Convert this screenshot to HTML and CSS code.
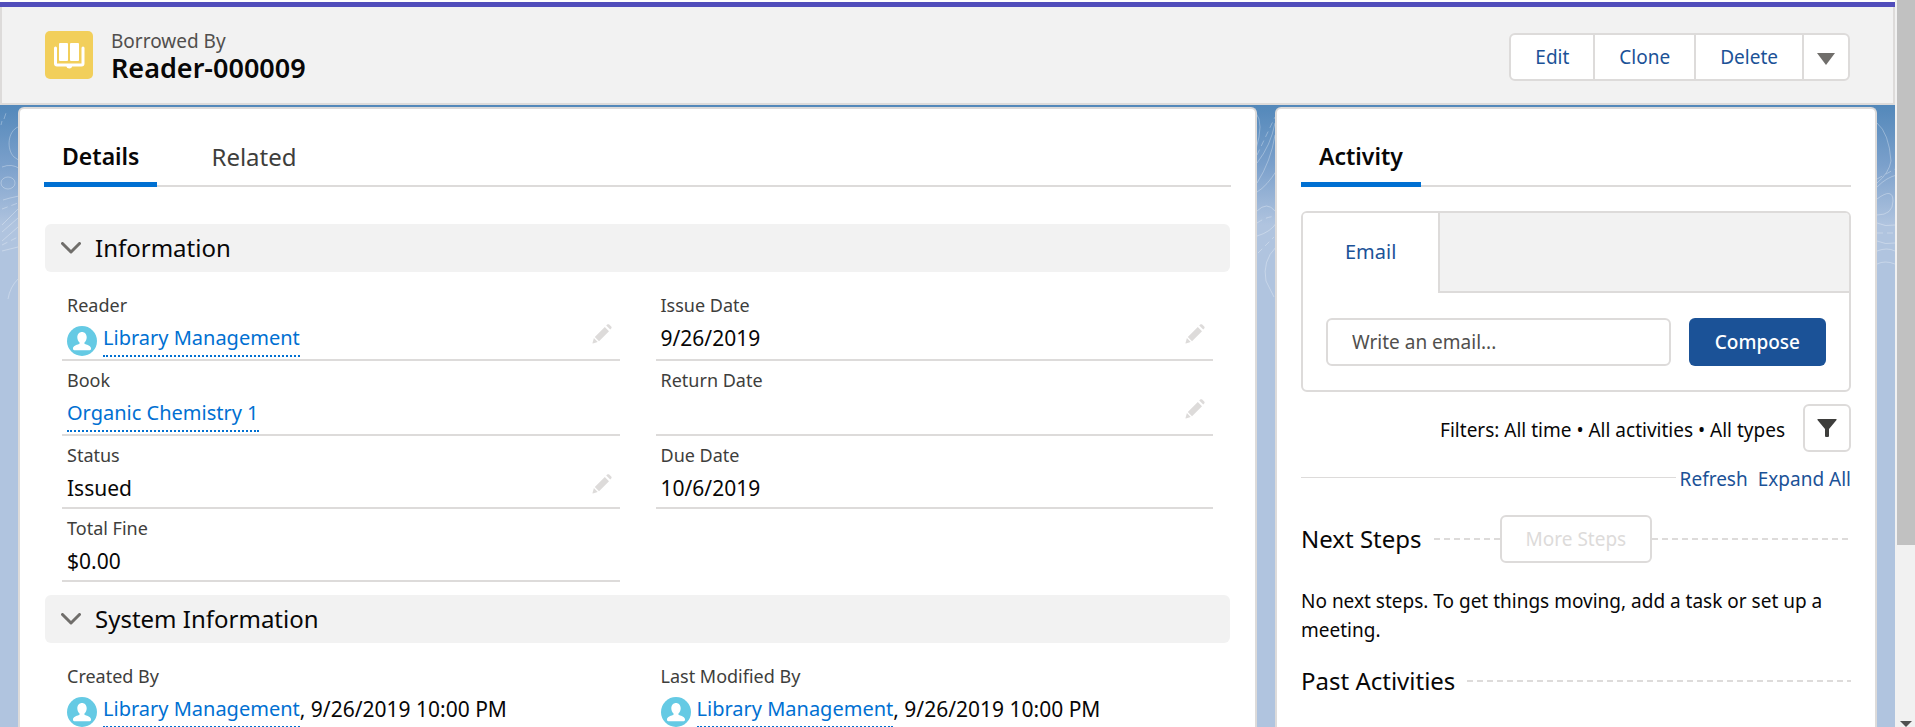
FILE: index.html
```
<!DOCTYPE html>
<html lang="en">
<head>
  <meta charset="utf-8">
  <meta name="viewport" content="width=device-width, initial-scale=1">
  <title>Reader-000009 | Borrowed By</title>
  <link rel="stylesheet" href="styles.css">
</head>
<body>

<!-- shared icons -->
<svg class="sprite" width="0" height="0" aria-hidden="true">
  <symbol id="pencil" viewBox="0 0 20 20">
    <path d="M14.200 1.600l1-1c.6-.6 1.400-.6 2 0l2 2c.6.6.6 1.400 0 2l-1 1zM12.800 3l4.200 4.200L7 17.200 2.800 13zM1.900 14.100l3.800 3.800L0.900 19.400c-.3.1-.5-.1-.4-.4z"/>
  </symbol>
  <symbol id="user" viewBox="0 0 30 30">
    <circle cx="15" cy="15" r="15" fill="#65cae4"/>
    <path d="M15 6c2.700 0 4.700 2.200 4.700 5.300 0 2-.9 4-2.200 5.200-.3.5-.2 1.200.5 1.500 3 1 6 2.200 6 4.400v.6c0 .7-.6 1.200-1.300 1.200H7.300c-.7 0-1.300-.5-1.300-1.200v-.6c0-2.200 3-3.400 6-4.400.7-.3.8-1 .5-1.500-1.300-1.200-2.200-3.200-2.200-5.200C10.300 8.200 12.300 6 15 6z" fill="#fff"/>
  </symbol>
  <symbol id="chevron" viewBox="0 0 20 12">
    <path d="M1.500 1.500L10 10l8.500-8.500" fill="none" stroke="#706e6b" stroke-width="3" stroke-linecap="round" stroke-linejoin="round"/>
  </symbol>
</svg>

<div class="page">
  <div class="topbar"></div>

  <header class="record-header">
    <svg class="record-icon" viewBox="0 0 48 48" aria-hidden="true">
      <rect width="48" height="48" rx="5" fill="#f2cf5b"/>
      <rect x="14" y="12" width="9" height="18" rx="1" fill="#fff"/>
      <rect x="25" y="12" width="9" height="18" rx="1" fill="#fff"/>
      <path d="M10.500 17v15.500q0 1.500 1.500 1.500h24.500q1.500 0 1.500-1.500V17" fill="none" stroke="#fff" stroke-width="3" stroke-linecap="round"/>
      <path d="M21.500 34h5.500v1.500q0 2-2.700 2t-2.800-2z" fill="#fff"/>
    </svg>
    <div class="record-name">
      <p>Borrowed By</p>
      <h1>Reader-000009</h1>
    </div>
    <div class="actions">
      <button type="button">Edit</button>
      <button type="button">Clone</button>
      <button type="button">Delete</button>
      <button type="button" class="more" aria-label="More actions"><svg width="18" height="12" viewBox="0 0 18 12"><path d="M0 0h18L9 12z" fill="#706e6b"/></svg></button>
    </div>
  </header>

  <div class="columns">
    <svg class="contours" viewBox="0 0 1895 200" preserveAspectRatio="none" aria-hidden="true">
      <path d="M18 22C8 26 6 44 14 52l6 4M2 62q10-4 18 2M3 95q6-2 16-4M2 120l16-16M2 127l16-14M2 136l16-14M2 146q8-2 16-4M8 194q2-12 10-20"/>
      <ellipse cx="8" cy="78" rx="7" ry="6"/>
      <path d="M1257 58q14-18 18-40M1257 78q14-22 18-48M1257 87q10-6 20-22M1257 106q10-10 18 0M1257 131q14-4 20-14M1276 142q-14 14-10 34l8 16M1256 8q8 10 0 36"/>
      <path d="M1877 18q12 10 14 38-2 12-14 22M1877 82q10-10 20-12M1877 94q16-12 16 2 0 14-16 14M1877 118q8 4 18 2M1877 136q8 4 18 2M1877 146q10-4 18 0M1877 159q8-4 18 0"/>
      <path class="dashed" d="M4 14l2-6M2 16l-1 4M2 104l16-6M2 140l16-8M1257 50l18-38M1257 118q12-8 20-6M1258 148l16-16M1877 74l18-10M1877 128h18"/>
    </svg>

    <main class="card details">
      <nav class="tabs">
        <a href="#details" class="active">Details</a>
        <a href="#related">Related</a>
      </nav>

      <section>
        <h2><svg width="20" height="12" aria-hidden="true"><use href="#chevron"/></svg>Information</h2>
        <div class="fields">
          <div class="field tall">
            <div class="label">Reader</div>
            <div class="value"><svg class="avatar" width="30" height="30" aria-hidden="true"><use href="#user"/></svg><a href="#reader">Library Management</a></div>
            <button type="button" class="edit" aria-label="Edit Reader"><svg width="20" height="20"><use href="#pencil"/></svg></button>
          </div>
          <div class="field tall">
            <div class="label">Issue Date</div>
            <div class="value">9/26/2019</div>
            <button type="button" class="edit" aria-label="Edit Issue Date"><svg width="20" height="20"><use href="#pencil"/></svg></button>
          </div>
          <div class="field tall">
            <div class="label">Book</div>
            <div class="value"><a href="#book">Organic Chemistry 1</a></div>
          </div>
          <div class="field tall">
            <div class="label">Return Date</div>
            <div class="value"></div>
            <button type="button" class="edit" aria-label="Edit Return Date"><svg width="20" height="20"><use href="#pencil"/></svg></button>
          </div>
          <div class="field">
            <div class="label">Status</div>
            <div class="value">Issued</div>
            <button type="button" class="edit" aria-label="Edit Status"><svg width="20" height="20"><use href="#pencil"/></svg></button>
          </div>
          <div class="field">
            <div class="label">Due Date</div>
            <div class="value">10/6/2019</div>
          </div>
          <div class="field">
            <div class="label">Total Fine</div>
            <div class="value">$0.00</div>
          </div>
        </div>
      </section>

      <section>
        <h2><svg width="20" height="12" aria-hidden="true"><use href="#chevron"/></svg>System Information</h2>
        <div class="fields">
          <div class="field tall">
            <div class="label">Created By</div>
            <div class="value"><svg class="avatar" width="30" height="30" aria-hidden="true"><use href="#user"/></svg><a href="#creator">Library Management</a><span>, 9/26/2019 10:00 PM</span></div>
          </div>
          <div class="field tall">
            <div class="label">Last Modified By</div>
            <div class="value"><svg class="avatar" width="30" height="30" aria-hidden="true"><use href="#user"/></svg><a href="#modifier">Library Management</a><span>, 9/26/2019 10:00 PM</span></div>
          </div>
        </div>
      </section>
    </main>

    <aside class="card activity">
      <nav class="tabs">
        <a href="#activity" class="active">Activity</a>
      </nav>

      <div class="composer">
        <div class="composer-tabs">
          <a href="#email">Email</a>
        </div>
        <form class="composer-body">
          <input type="text" aria-label="Write an email" placeholder="Write an email...">
          <button type="button">Compose</button>
        </form>
      </div>

      <div class="filters">
        <p>Filters: All time • All activities • All types</p>
        <button type="button" aria-label="Filter"><svg width="20" height="20" viewBox="0 0 20 20"><path d="M1 1h18q1 0 .5 1L12 11v7q0 1-1 1H9q-1 0-1-1v-7L.5 2Q0 1 1 1z" fill="#3e3e3c"/></svg></button>
      </div>

      <div class="refresh">
        <a href="#refresh">Refresh</a>
        <a href="#expand">Expand All</a>
      </div>

      <div class="timeline">
        <h3>Next Steps</h3>
        <i class="short"></i>
        <button type="button" disabled>More Steps</button>
        <i></i>
      </div>
      <p class="empty">No next steps. To get things moving, add a task or set up a meeting.</p>
      <div class="timeline">
        <h3>Past Activities</h3>
        <i></i>
      </div>
    </aside>
  </div>
</div>

<div class="scrollbar" aria-hidden="true">
  <div class="thumb"></div>
  <svg width="12" height="6" viewBox="0 0 12 6"><path d="M0 0h12L6 6z" fill="#505050"/></svg>
</div>

</body>
</html>
```

FILE: styles.css
```
* { box-sizing: border-box; }

body {
  margin: 0;
  height: 100vh;
  display: flex;
  overflow: hidden;
  background: #b0c4df;
  color: #080707;
  font: 20px/30px "Noto Sans", "Open Sans", sans-serif;
}
h1, h2, h3, p { margin: 0; font-weight: 400; }
a { color: #0070d2; text-decoration: none; }
button { font: inherit; margin: 0; cursor: pointer; }
button svg { display: block; }
.sprite { position: absolute; }

.page { flex: 1; min-width: 0; display: flex; flex-direction: column; }
.topbar { flex: none; height: 7px; border-top: 2px solid #fff; background: #514dbb; }

/* record header */
.record-header {
  flex: none;
  display: flex;
  align-items: center;
  height: 98px;
  padding: 0 43px;
  background: #f2f2f2;
  border: 2px solid #dddbda;
  border-top: 0;
}
.record-icon { width: 48px; height: 48px; }
.record-name { flex: 1; padding-left: 18px; }
.record-name p { color: #514f4d; line-height: 26px; font-size: 19px; }
.record-name h1 { font-size: 27px; font-weight: 600; line-height: 28px; }

.actions { display: flex; padding-top: 3px; }
.actions button {
  height: 48px;
  padding: 0 24px;
  background: #fff;
  border: 2px solid #dddbda;
  color: #1b5297;
  font-size: 19px;
}
.actions button + button { margin-left: -2px; }
.actions button:first-child { border-radius: 6px 0 0 6px; }
.actions button:last-child { border-radius: 0 6px 6px 0; }
.actions .more { padding: 4px 13px 0; }

/* body */
.columns {
  flex: 1;
  min-height: 0;
  position: relative;
  display: grid;
  grid-template-columns: 1239fr 602fr;
  gap: 18px;
  padding: 2px 18px 0;
  background: linear-gradient(#5388ba, #7ba0cb 60px, #b0c4df 120px);
}
.contours { position: absolute; top: 0; left: 0; width: 100%; height: 200px; fill: none; stroke: rgba(255, 255, 255, .3); stroke-width: 1; }
.contours .dashed { stroke-dasharray: 6 4; }

.card {
  position: relative;
  background: #fff;
  border: 2px solid #dddbda;
  border-bottom: 0;
  border-radius: 6px 6px 0 0;
  padding: 26px 24px 0;
}

.tabs { display: flex; border-bottom: 2px solid #dddbda; }
.tabs a {
  padding: 0 18px 4px;
  margin-bottom: -2px;
  line-height: 43px;
  border-bottom: 5px solid transparent;
  color: #3e3e3c;
  font-size: 24px;
}
.tabs a + a { margin-left: 36px; }
.tabs .active { color: #080707; font-size: 23px; font-weight: 600; border-color: #0070d2; }

/* field sections */
.details section:first-of-type { margin-top: 37px; }
.details h2 {
  display: flex;
  align-items: center;
  gap: 14px;
  height: 48px;
  margin: 0 1px;
  padding-left: 16px;
  background: #f2f2f2;
  border-radius: 6px;
  font-size: 24px;
}
.fields {
  display: grid;
  grid-template-columns: 1fr 1fr;
  column-gap: 36px;
  padding: 14px 18px 13px;
}
.field {
  position: relative;
  height: 73px;
  padding: 6px 5px 0;
  border-bottom: 2px solid #dddbda;
}
.field.tall { height: 75px; }
.label { color: #3e3e3c; font-size: 18px; line-height: 26px; }
.value { display: flex; height: 40px; font-size: 21px; line-height: 40px; }
.value a { height: 39px; border-bottom: 2px dotted #0070d2; font-size: 20px; }
.avatar { margin: 8px 6px 0 0; }
.edit { position: absolute; right: 8px; top: 38px; padding: 0; border: 0; background: none; fill: #dddbda; }

/* activity */
.composer { margin-top: 24px; border: 2px solid #dddbda; border-radius: 6px; }
.composer-tabs { display: flex; height: 80px; background: #f2f2f2; border-bottom: 2px solid #dddbda; border-radius: 4px 4px 0 0; }
.composer-tabs a {
  height: 80px;
  padding: 0 42px;
  line-height: 78px;
  background: #fff;
  border-right: 2px solid #dddbda;
  border-radius: 4px 0 0 0;
  color: #1b5297;
}
.composer-body { display: flex; gap: 18px; padding: 25px 23px 24px; }
.composer-body input {
  flex: 1;
  min-width: 0;
  height: 48px;
  padding: 0 24px;
  border: 2px solid #dddbda;
  border-radius: 6px;
  font: inherit;
  font-size: 19px;
}
.composer-body input::placeholder { color: #514f4d; opacity: 1; }
.composer-body button {
  padding: 0 26px;
  border: 0;
  border-radius: 6px;
  background: #1b5297;
  color: #fff;
  font-size: 19px;
  font-weight: 500;
}

.filters { display: flex; justify-content: flex-end; align-items: center; gap: 18px; margin-top: 12px; font-size: 19px; }
.filters p { padding-top: 4px; }
.filters button { width: 48px; height: 48px; padding: 12px; background: #fff; border: 2px solid #dddbda; border-radius: 6px; }

.refresh { display: flex; align-items: center; gap: 10px; margin-top: 12px; font-size: 19px; }
.refresh::before { content: ""; flex: 1; height: 1px; margin: 0 -6px 4px 0; background: #dddbda; }
.refresh a { color: #1b5297; }

.timeline { display: flex; align-items: center; margin-top: 21px; }
.timeline h3 { font-size: 24px; padding-right: 12px; }
.timeline i { flex: 1; height: 2px; background: repeating-linear-gradient(90deg, #dddbda 0 6px, transparent 6px 10px); }
.timeline .short { flex: 0 0 66px; }
.timeline button {
  height: 48px;
  padding: 0 24px;
  background: #fff;
  border: 2px solid #dddbda;
  border-radius: 6px;
  color: #dddbda;
  font-size: 19px;
}
.empty { margin-top: 24px; font-size: 19px; line-height: 29px; }

/* scrollbar */
.scrollbar {
  flex: none;
  width: 20px;
  display: flex;
  flex-direction: column;
  justify-content: space-between;
  align-items: center;
  background: #f1f1f1;
  border-left: 2px solid #f1f1f1;
}
.thumb { width: 100%; height: 75%; background: #c1c1c1; }
```
